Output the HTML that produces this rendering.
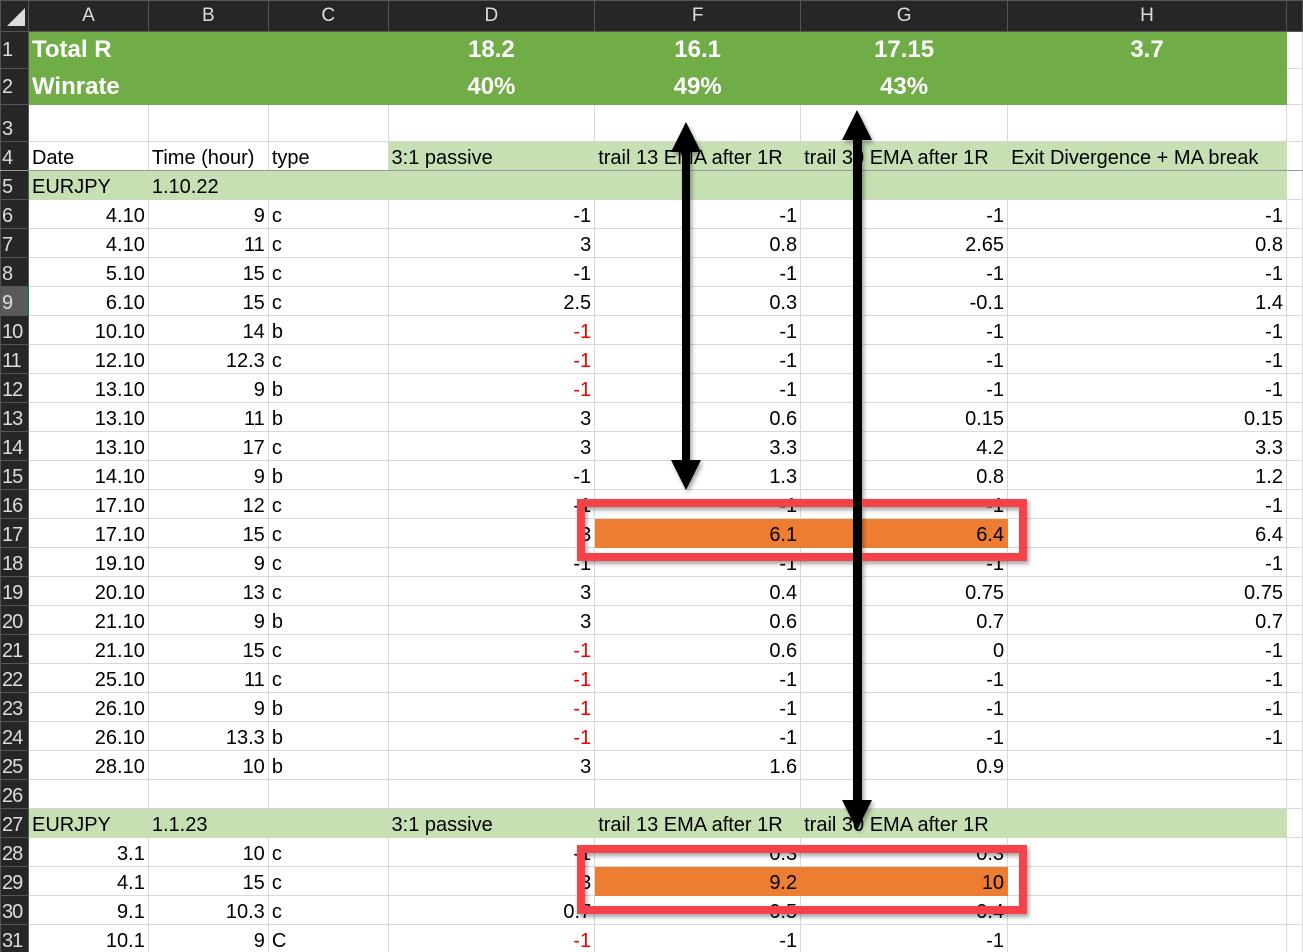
<!DOCTYPE html>
<html><head><meta charset="utf-8">
<style>
html,body{margin:0;padding:0;background:#fff;width:1303px;height:952px;overflow:hidden;position:relative}
table{border-collapse:collapse;table-layout:fixed;font-family:"Liberation Sans",sans-serif;font-size:20px;color:#000;position:absolute;left:0;top:0}
td{border:1px solid #d9d9d9;padding:0 3px;height:29px;white-space:nowrap;overflow:visible;line-height:20px;vertical-align:bottom;padding-bottom:2px;box-sizing:border-box}
tr.h td{background:#262626;color:#ddd;text-align:center;border:1px solid #555;font-size:19px;height:31px;vertical-align:middle;padding:0}
td.rh{background:#262626;color:#ddd;border-color:#555;text-align:left;padding-left:1px;font-size:20px;letter-spacing:-1px}
td.rhs{background:#5a5a5a;border-right:2px solid #217346}
.r{text-align:right}.c{text-align:center}
.red{color:#e00}
.g{background:#70ad47;border-color:#70ad47;color:#fff;font-weight:bold;font-size:24px}
.lg{background:#c6e0b4;border-color:#c6e0b4}
.or{background:#ed7d31;border-color:#ed7d31}
tr.t td{vertical-align:middle;padding-bottom:0}
tr.four td{border-bottom:1px solid #999}
</style></head><body>
<table>
<colgroup><col style="width:28px"><col style="width:120px"><col style="width:120px"><col style="width:120px"><col style="width:207px"><col style="width:206px"><col style="width:207px"><col style="width:279px"><col style="width:16px"></colgroup>
<tr class="h"><td style="position:relative"><svg width="22" height="22" style="position:absolute;left:4px;top:5px"><polygon points="20,2 20,20 2,20" fill="#ddd"/></svg></td><td>A</td><td>B</td><td>C</td><td>D</td><td>F</td><td>G</td><td>H</td><td></td></tr>
<tr class="t"><td class="rh" style="height:37px">1</td><td class="g" colspan="3">Total R</td><td class="g c">18.2</td><td class="g c">16.1</td><td class="g c">17.15</td><td class="g c">3.7</td><td></td></tr>
<tr class="t"><td class="rh" style="height:36px">2</td><td class="g" colspan="3">Winrate</td><td class="g c">40%</td><td class="g c">49%</td><td class="g c">43%</td><td class="g"></td><td></td></tr>
<tr><td class="rh" style="height:37px">3</td><td></td><td></td><td></td><td></td><td></td><td></td><td></td><td></td></tr>
<tr class="four"><td class="rh">4</td><td>Date</td><td>Time (hour)</td><td>type</td><td class="lg">3:1 passive</td><td class="lg">trail 13 EMA after 1R</td><td class="lg">trail 30 EMA after 1R</td><td class="lg">Exit Divergence + MA break</td><td></td></tr>
<tr><td class="rh">5</td><td class="lg">EURJPY</td><td class="lg">1.10.22</td><td class="lg"></td><td class="lg"></td><td class="lg"></td><td class="lg"></td><td class="lg"></td><td></td></tr>
<tr><td class="rh">6</td><td class="r">4.10</td><td class="r">9</td><td>c</td><td class="r">-1</td><td class="r">-1</td><td class="r">-1</td><td class="r">-1</td><td></td></tr>
<tr><td class="rh">7</td><td class="r">4.10</td><td class="r">11</td><td>c</td><td class="r">3</td><td class="r">0.8</td><td class="r">2.65</td><td class="r">0.8</td><td></td></tr>
<tr><td class="rh">8</td><td class="r">5.10</td><td class="r">15</td><td>c</td><td class="r">-1</td><td class="r">-1</td><td class="r">-1</td><td class="r">-1</td><td></td></tr>
<tr><td class="rh rhs">9</td><td class="r">6.10</td><td class="r">15</td><td>c</td><td class="r">2.5</td><td class="r">0.3</td><td class="r">-0.1</td><td class="r">1.4</td><td></td></tr>
<tr><td class="rh">10</td><td class="r">10.10</td><td class="r">14</td><td>b</td><td class="r red">-1</td><td class="r">-1</td><td class="r">-1</td><td class="r">-1</td><td></td></tr>
<tr><td class="rh">11</td><td class="r">12.10</td><td class="r">12.3</td><td>c</td><td class="r red">-1</td><td class="r">-1</td><td class="r">-1</td><td class="r">-1</td><td></td></tr>
<tr><td class="rh">12</td><td class="r">13.10</td><td class="r">9</td><td>b</td><td class="r red">-1</td><td class="r">-1</td><td class="r">-1</td><td class="r">-1</td><td></td></tr>
<tr><td class="rh">13</td><td class="r">13.10</td><td class="r">11</td><td>b</td><td class="r">3</td><td class="r">0.6</td><td class="r">0.15</td><td class="r">0.15</td><td></td></tr>
<tr><td class="rh">14</td><td class="r">13.10</td><td class="r">17</td><td>c</td><td class="r">3</td><td class="r">3.3</td><td class="r">4.2</td><td class="r">3.3</td><td></td></tr>
<tr><td class="rh">15</td><td class="r">14.10</td><td class="r">9</td><td>b</td><td class="r">-1</td><td class="r">1.3</td><td class="r">0.8</td><td class="r">1.2</td><td></td></tr>
<tr><td class="rh">16</td><td class="r">17.10</td><td class="r">12</td><td>c</td><td class="r">-1</td><td class="r">-1</td><td class="r">-1</td><td class="r">-1</td><td></td></tr>
<tr><td class="rh">17</td><td class="r">17.10</td><td class="r">15</td><td>c</td><td class="r">3</td><td class="r or">6.1</td><td class="r or">6.4</td><td class="r">6.4</td><td></td></tr>
<tr><td class="rh">18</td><td class="r">19.10</td><td class="r">9</td><td>c</td><td class="r">-1</td><td class="r">-1</td><td class="r">-1</td><td class="r">-1</td><td></td></tr>
<tr><td class="rh">19</td><td class="r">20.10</td><td class="r">13</td><td>c</td><td class="r">3</td><td class="r">0.4</td><td class="r">0.75</td><td class="r">0.75</td><td></td></tr>
<tr><td class="rh">20</td><td class="r">21.10</td><td class="r">9</td><td>b</td><td class="r">3</td><td class="r">0.6</td><td class="r">0.7</td><td class="r">0.7</td><td></td></tr>
<tr><td class="rh">21</td><td class="r">21.10</td><td class="r">15</td><td>c</td><td class="r red">-1</td><td class="r">0.6</td><td class="r">0</td><td class="r">-1</td><td></td></tr>
<tr><td class="rh">22</td><td class="r">25.10</td><td class="r">11</td><td>c</td><td class="r red">-1</td><td class="r">-1</td><td class="r">-1</td><td class="r">-1</td><td></td></tr>
<tr><td class="rh">23</td><td class="r">26.10</td><td class="r">9</td><td>b</td><td class="r red">-1</td><td class="r">-1</td><td class="r">-1</td><td class="r">-1</td><td></td></tr>
<tr><td class="rh">24</td><td class="r">26.10</td><td class="r">13.3</td><td>b</td><td class="r red">-1</td><td class="r">-1</td><td class="r">-1</td><td class="r">-1</td><td></td></tr>
<tr><td class="rh">25</td><td class="r">28.10</td><td class="r">10</td><td>b</td><td class="r">3</td><td class="r">1.6</td><td class="r">0.9</td><td></td><td></td></tr>
<tr><td class="rh">26</td><td></td><td></td><td></td><td></td><td></td><td></td><td></td><td></td></tr>
<tr><td class="rh">27</td><td class="lg">EURJPY</td><td class="lg">1.1.23</td><td class="lg"></td><td class="lg">3:1 passive</td><td class="lg">trail 13 EMA after 1R</td><td class="lg">trail 30 EMA after 1R</td><td class="lg"></td><td></td></tr>
<tr><td class="rh">28</td><td class="r">3.1</td><td class="r">10</td><td>c</td><td class="r">-1</td><td class="r">0.3</td><td class="r">0.3</td><td></td><td></td></tr>
<tr><td class="rh">29</td><td class="r">4.1</td><td class="r">15</td><td>c</td><td class="r">3</td><td class="r or">9.2</td><td class="r or">10</td><td></td><td></td></tr>
<tr><td class="rh">30</td><td class="r">9.1</td><td class="r">10.3</td><td>c</td><td class="r">0.7</td><td class="r">0.5</td><td class="r">0.4</td><td></td><td></td></tr>
<tr><td class="rh">31</td><td class="r">10.1</td><td class="r">9</td><td>C</td><td class="r red">-1</td><td class="r">-1</td><td class="r">-1</td><td></td><td></td></tr>
</table>
<svg width="1303" height="952" style="position:absolute;left:0;top:0">
<defs><filter id="sh" x="-10%" y="-10%" width="120%" height="130%"><feDropShadow dx="2" dy="3" stdDeviation="2" flood-color="#000" flood-opacity="0.35"/></filter></defs>
<g filter="url(#sh)">
<rect x="581" y="503" width="442" height="54" fill="none" stroke="#f5424a" stroke-width="8"/>
<rect x="581" y="849" width="442" height="61" fill="none" stroke="#f5424a" stroke-width="8"/>
<rect x="682" y="150" width="8" height="312" fill="#000"/>
<polygon points="686,122 701,152 671,152" fill="#000"/>
<polygon points="686,490 701,460 671,460" fill="#000"/>
<rect x="853" y="138" width="9" height="666" fill="#000"/>
<polygon points="857,110 872,140 842,140" fill="#000"/>
<polygon points="857,830 872,800 842,800" fill="#000"/>
</g>
</svg>
</body></html>
